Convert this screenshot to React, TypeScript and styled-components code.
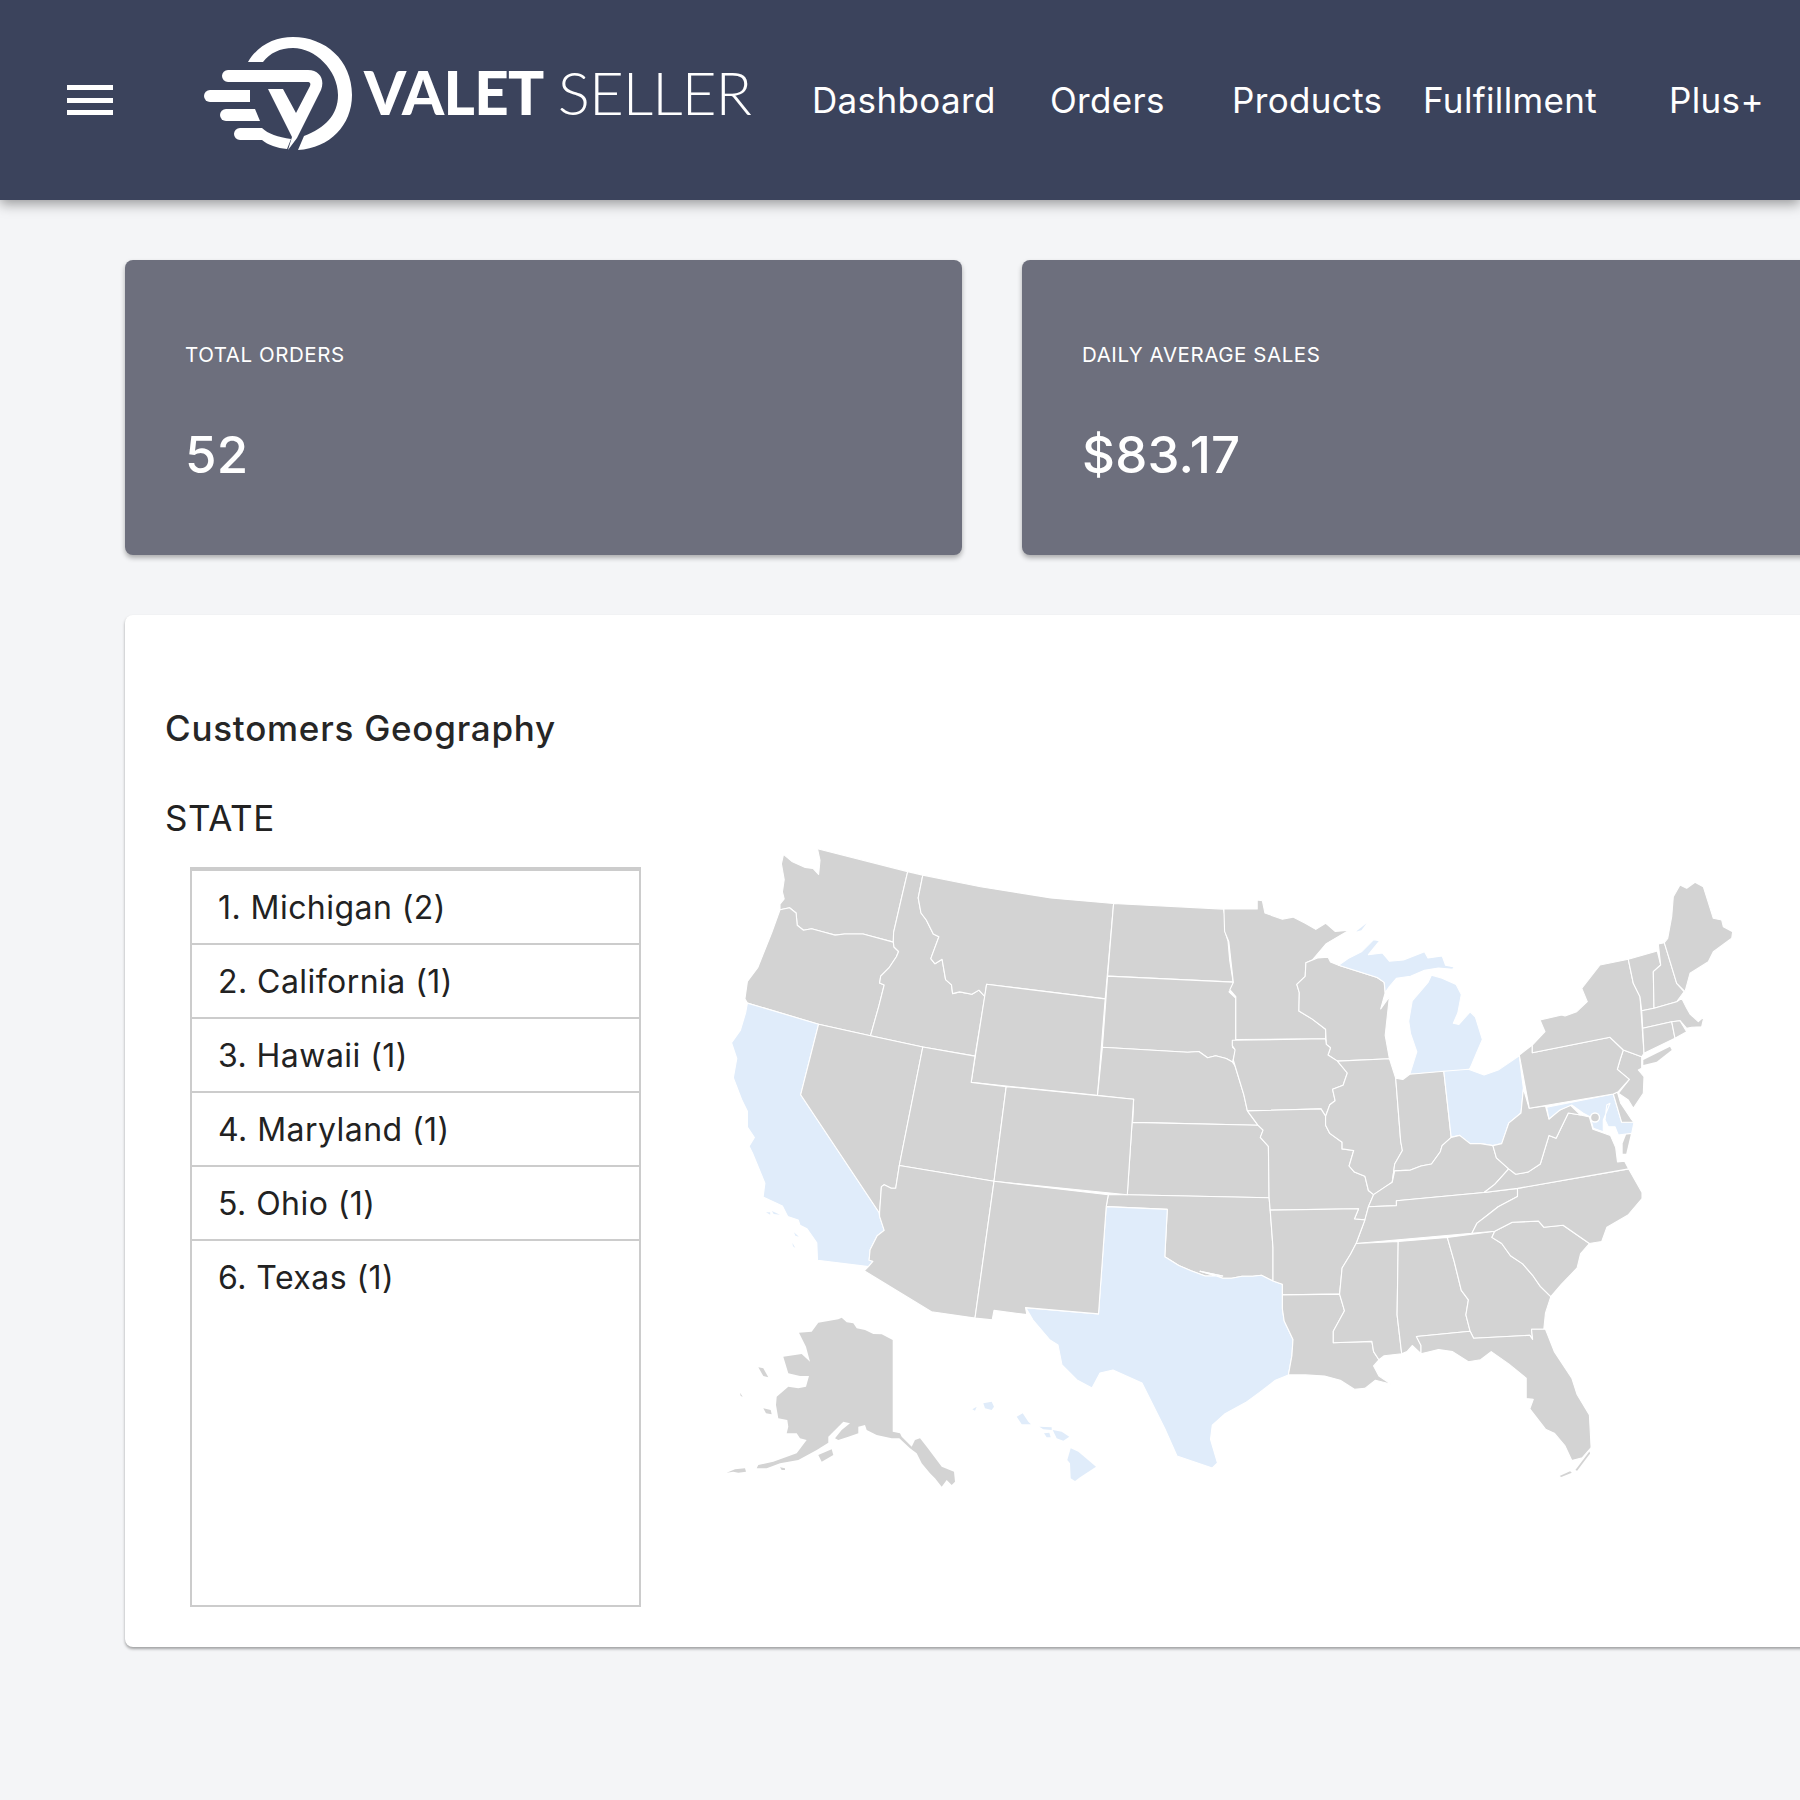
import React from 'react';
import styled, { createGlobalStyle } from 'styled-components';

const Global = createGlobalStyle`
  html, body { margin: 0; padding: 0; background: #f4f5f7; }
  body { font-family: Inter, Lato, "Noto Sans", sans-serif; color: #222; overflow: hidden; height: 1800px; }
`;

const conv = (s: string, ox: number, oy: number, sx: number, sy: number) =>
  s.trim().split(/\s+/).map((p) => {
    const [x, y] = p.split(',').map(Number);
    return `${(ox + x * sx).toFixed(1)},${(oy + y * sy).toFixed(1)}`;
  }).join(' ');
const W = (s: string) => conv(s, 700, 820, 0.3508, 0.3508);
const E = (s: string) => conv(s, 1200, 860, 0.3508, 0.408);
const N = (s: string) => conv(s, 1500, 870, 1 / 3, 1 / 3);
const A = (s: string) => conv(s, 700, 1290, 1 / 3, 1 / 3);

const STATES: { on?: boolean; bare?: boolean; pts: string }[] = [
  { pts: W('335,82 592,147 575,220 552,320 551,348 465,325 412,325 385,328 355,320 318,310 295,314 277,300 274,265 255,250 228,256 228,240 240,225 235,205 240,170 232,125 238,98 262,118 300,135 322,138 338,155 342,115') },
  { pts: W('228,256 255,250 274,265 277,300 295,314 318,310 355,320 385,328 412,325 465,325 551,348 553,362 566,375 560,390 540,420 515,445 512,465 525,470 510,530 486,615 338,582 135,522 128,510 135,460 165,420 205,320') },
  { pts: W('592,147 635,157 622,222 630,265 645,285 665,325 681,333 658,395 670,410 690,397 700,455 717,470 720,495 740,490 775,497 795,485 812,503 784,673 635,647 486,615 510,530 525,470 512,465 515,445 540,420 560,390 566,375 553,362 551,348 552,320 575,220') },
  { pts: W('635,157 800,190 1000,222 1179,238 1155,510 817,468 812,503 795,485 775,497 740,490 720,495 717,470 700,455 690,397 670,410 658,395 681,333 665,325 645,285 630,265 622,222') },
  { pts: W('817,468 1155,510 1133,785 773,748') },
  { pts: W('1179,238 1492,254 1497,275 1497,318 1505,345 1510,400 1520,462 1162,445') },
  { pts: W('1162,445 1520,462 1520,475 1508,490 1527,508 1527,627 1518,632 1518,648 1527,655 1518,690 1500,680 1470,672 1447,678 1422,660 1390,662 1147,648') },
  { pts: W('1147,648 1390,662 1422,660 1447,678 1470,672 1500,680 1518,690') + ' ' + E('100,505 125,575 135,615 165,650') + ' ' + W('1233,862 1236,796 1133,785') },
  { pts: W('1233,862') + ' ' + E('165,650 180,662 172,680 195,702 197,828') + ' ' + W('1218,1068 1236,796') },
  { pts: W('1164,1068 1218,1068') + ' ' + E('197,828 200,858 208,950 208,1032 175,1018 150,1020 120,1020 90,1025 65,1025 40,1018 0,1008') + ' ' + W('1490,1300 1440,1300 1400,1285 1365,1270 1325,1245 1332,1110 1158,1102') },
  { on: true, pts: W('1158,1102 1332,1110 1325,1245 1365,1270 1400,1285 1440,1300 1490,1300') + ' ' + E('0,1008 40,1018 65,1025 90,1025 120,1020 150,1020 175,1018 208,1032 235,1040 235,1100 240,1130 265,1175 262,1215 252,1262 215,1275 170,1305 130,1330 70,1358 35,1385 30,1420 50,1478 35,1490') + ' 1177,1456 1165,1429 1142,1383 1113,1370 1100,1373 1092,1388 1077,1380 1062,1365 1058,1345 1050,1340 1033,1320 1026,1308 ' + W('928,1390 1136,1408') },
  { on: true, pts: W('135,522 338,582 287,783 510,1118 512,1130 525,1170 505,1185 485,1225 482,1255 493,1258 480,1273 335,1255 333,1205 305,1165 285,1155 280,1140 250,1130 235,1100 180,1075 185,1035 150,950 140,930 155,905 135,875 135,830 120,800 95,735 105,680 90,635 115,600 130,550') },
  { on: true, bare: true, pts: W('188,1118 200,1118 200,1125') },
  { on: true, bare: true, pts: W('205,1115 228,1125 210,1123') },
  { on: true, bare: true, pts: W('268,1175 282,1188 272,1185') },
  { on: true, bare: true, pts: W('263,1205 272,1220 265,1215') },
  { pts: W('338,582 486,615 635,647 568,985 558,1050 545,1050 525,1040 517,1045 512,1118 510,1118 287,783') },
  { pts: W('635,647 784,673 773,748 873,760 838,1030 568,985') },
  { pts: W('568,985 838,1030 784,1420 660,1402 468,1285 480,1273 493,1258 482,1255 485,1225 505,1185 525,1170 512,1130 512,1118 517,1045 525,1040 545,1050 558,1050') },
  { pts: W('873,760 1236,796 1218,1068 838,1030') },
  { pts: W('838,1030 1164,1068 1158,1102 1136,1408 928,1390 932,1410 838,1398 833,1425 784,1420') },
  { pts: E('68,120 163,120 163,98 178,100 185,130 235,145 265,140 300,155 330,170 358,155 385,175 425,172 360,205 320,245 302,252 300,285 276,305 283,325 282,370 320,390 358,415 358,438 102,440 102,335 85,318 95,300 82,200 70,175') },
  { pts: E('302,252 335,240 365,238 372,250 395,258 440,270 505,288 525,300 528,325 515,365 540,335 528,430 540,487 392,493 365,478 372,460 360,452 358,415 320,390 282,370 283,325 276,305 300,285') },
  { pts: E('92,442 358,438 360,452 372,460 365,478 392,493 420,522 408,552 378,562 385,590 370,600 358,628 345,610 135,615 125,575 100,505 95,490 100,465 92,455') },
  { pts: E('135,615 345,610 358,628 358,650 370,670 405,692 405,708 438,712 425,750 440,765 470,775 480,810 495,820 480,850 470,882 440,880 452,855 200,858 197,828 195,702 172,680 180,662 165,650') },
  { on: true, pts: E('395,258 425,240 460,225 495,195 512,198 480,232 520,228 540,248 580,245 640,225 650,240 690,235 700,258 725,262 720,268 680,265 640,270 600,285 560,290 540,310 528,325 525,300 505,288 440,270') },
  { on: true, bare: true, pts: E('445,175 475,155 460,172') },
  { on: true, pts: E('598,525 618,470 600,425 595,395 605,345 630,320 650,300 660,282 690,290 730,305 745,330 735,375 722,400 738,403 770,372 785,385 805,440 790,470 770,510 765,515') },
  { pts: E('392,493 540,487 558,535 572,690 577,712 555,745 548,790 530,800 495,820 480,810 470,775 440,765 425,750 438,712 405,708 405,692 370,670 358,650 358,628 370,600 385,590 378,562 408,552 420,522') },
  { pts: E('558,535 578,538 598,525 695,518 716,680 690,700 685,715 660,745 630,750 600,760 555,762 548,790 555,745 577,712 572,690') },
  { on: true, pts: E('695,518 765,513 810,527 850,515 910,480 922,560 915,620 880,645 860,695 835,700 800,695 770,695 740,675 716,680') },
  { pts: E('716,680 740,675 770,695 800,695 835,700 845,730 880,757 840,795 810,815 560,835 560,847 480,850 495,820 530,800 548,790 555,762 600,760 630,750 660,745 685,715 690,700') },
  { pts: E('480,850 560,847 560,835 810,815 905,805 905,825 850,850 820,870 790,890 775,915 445,940 460,905 470,882') },
  { pts: E('200,858 452,855 440,880 470,882 460,905 445,940 430,965 405,1000 398,1064 235,1066 235,1040 208,1032 208,950') },
  { pts: E('235,1066 398,1064 412,1105 380,1155 380,1183 490,1180 495,1205 510,1225 495,1240 510,1265 545,1285 500,1275 470,1295 440,1297 400,1275 355,1265 300,1262 252,1262 262,1215 265,1175 240,1130 235,1100') },
  { pts: E('445,940 565,935 562,1115 575,1210 525,1215 510,1225 495,1205 490,1180 380,1183 380,1155 412,1105 398,1064 405,1000 430,965') },
  { pts: E('565,935 705,925 725,985 745,1055 765,1078 758,1115 770,1155 617,1168 630,1190 630,1210 605,1190 590,1205 575,1210 562,1115') },
  { pts: E('705,925 840,910 832,925 860,940 885,970 920,990 950,1020 970,1045 1000,1070 985,1110 980,1150 945,1150 948,1175 940,1165 780,1172 770,1155 758,1115 765,1078 745,1055 725,985') },
  { pts: E('617,1168 770,1155 780,1172 940,1165 948,1175 945,1150 985,1150 1010,1205 1060,1270 1075,1310 1110,1360 1115,1440 1090,1465 1060,1472 1040,1435 1010,1405 985,1395 940,1345 950,1322 930,1320 930,1270 880,1235 830,1205 800,1225 765,1230 720,1205 680,1200 630,1210 630,1190') },
  { bare: true, pts: E('1025,1510 1055,1498 1060,1502 1030,1512') },
  { bare: true, pts: E('1070,1495 1110,1450 1112,1455 1075,1497') },
  { pts: E('840,910 890,888 965,885 980,900 1035,895 1110,940 1085,965 1075,1000 1030,1040 1000,1070 970,1045 950,1020 920,990 885,970 860,940 832,925') },
  { pts: E('905,805 1222,757 1260,815 1260,830 1220,870 1160,900 1145,935 1110,940 1035,895 980,900 965,885 890,888 840,910 775,915 790,890 820,870 850,850 905,825') },
  { pts: E('810,815 840,795 880,757 900,770 935,765 970,745 995,675 1015,682 1050,620 1085,625 1110,630 1120,660 1170,675 1185,705 1190,740 1210,738 1222,757 905,805') },
  { bare: true, pts: E('1215,672 1228,672 1215,720 1205,720 1205,695') },
  { pts: E('835,700 860,695 880,645 915,620 922,560 938,608 985,603 995,635 1020,615 1055,600 1085,625 1050,620 1015,682 995,675 970,745 935,765 900,770 880,757 845,730') },
  { on: true, pts: N('140,712 340,672 365,757 402,757 395,790 355,795 345,770 325,770 315,750 320,705 330,700 310,750 310,785 280,775 270,740 250,730 215,705 180,720 147,747') },
  { pts: N('340,672 352,665 362,700 392,745 402,757 365,757') },
  { pts: N('370,540 425,560 425,595 415,600 432,620 430,670 400,715 385,690 355,670 388,628 352,598 360,570') },
  { pts: N('58,555 97,525 97,548 330,502 370,540 360,570 352,598 388,628 355,665 340,672 88,715') },
  { pts: N('97,525 135,485 120,450 185,435 195,438 230,425 262,395 245,355 300,285 385,268 400,340 420,380 432,550 425,560 370,540 330,502 97,548') },
  { bare: true, pts: N('430,570 510,530 515,540 470,575 430,585') },
  { pts: N('385,268 472,243 482,285 460,305 462,415 425,422 420,380 400,340') },
  { pts: N('475,222 493,218 530,340 552,365 530,395 462,415 460,305 482,285') },
  { pts: N('493,218 503,205 515,140 520,80 540,45 560,55 585,37 610,50 640,145 665,150 670,170 698,185 695,205 640,245 625,275 570,310 555,365 530,340') },
  { pts: N('425,422 462,415 530,395 545,385 560,415 570,432 595,455 612,440 605,470 575,472 560,475 540,452 515,455 428,475') },
  { pts: N('428,475 515,455 525,505 432,550') },
  { pts: N('515,455 540,452 560,485 525,505') },
  { bare: true, pts: A('297,128 335,125 355,98 415,88 425,83 440,97 460,100 470,115 495,120 520,132 545,133 578,150 578,425 600,430 605,440 635,470 645,450 660,445 680,470 725,530 762,545 765,575 755,585 740,570 725,590 705,565 690,550 665,520 650,490 630,475 598,445 575,445 530,435 500,420 495,405 475,410 475,430 445,440 415,450 405,445 425,420 450,400 430,395 385,440 385,458 350,480 295,510 240,520 200,535 170,535 175,525 220,515 290,490 320,450 300,445 290,430 260,430 265,410 262,390 235,385 228,345 230,320 265,290 295,295 318,290 327,258 300,258 265,250 250,200 305,192 330,215 318,170') },
  { bare: true, pts: A('80,548 105,538 135,535 138,545 115,548 100,545') },
  { bare: true, pts: A('175,232 190,235 205,262 190,258') },
  { bare: true, pts: A('120,308 128,320 122,318') },
  { bare: true, pts: A('190,355 212,360 215,373 198,370') },
  { bare: true, pts: A('355,495 395,478 400,495 365,515') },
  { bare: true, pts: A('240,532 255,535 255,540 245,540') },
  { on: true, bare: true, pts: A('850,340 875,335 882,350 875,360 855,355') },
  { on: true, bare: true, pts: A('817,358 830,350 825,362') },
  { on: true, bare: true, pts: A('950,380 968,370 985,395 993,403 965,403') },
  { on: true, bare: true, pts: A('1018,410 1055,412 1055,420 1030,418') },
  { on: true, bare: true, pts: A('1032,430 1048,428 1052,442 1040,442') },
  { on: true, bare: true, pts: A('1058,420 1085,425 1108,440 1090,452 1070,445') },
  { on: true, bare: true, pts: A('1112,475 1135,485 1188,530 1140,562 1125,573 1112,565 1110,520 1102,510') },
];

const NAV = [
  { label: 'Dashboard', w: 238 },
  { label: 'Orders', w: 182 },
  { label: 'Products', w: 191 },
  { label: 'Fulfillment', w: 246 },
  { label: 'Plus+', w: 100 },
];

const RANK = ['1. Michigan (2)', '2. California (1)', '3. Hawaii (1)', '4. Maryland (1)', '5. Ohio (1)', '6. Texas (1)'];

const Header = styled.header`
  height: 200px;
  background: #3b435c;
  box-shadow: 0 4px 12px rgba(0, 0, 0, 0.38);
  display: flex;
  align-items: center;
  padding-left: 67px;
  position: relative;
`;
const Burger = styled.div`
  width: 46px;
  height: 30px;
  display: flex;
  flex-direction: column;
  justify-content: space-between;
  margin-right: 87px;
  & > span { display: block; height: 5px; background: #fff; }
`;
const LogoMark = styled.svg`
  width: 160px;
  height: 125px;
  flex: none;
  margin-top: -15px;
`;
const Brand = styled.div`
  display: flex;
  align-items: baseline;
  width: 448px;
  flex: none;
  margin-left: 4px;
  margin-top: -17px;
  color: #fff;
  font-family: Lato, sans-serif;
  font-size: 60px;
  line-height: 60px;
`;
const BrandStrong = styled.span`
  font-weight: 900;
  letter-spacing: -0.6px;
`;
const BrandThin = styled.span`
  font-weight: 300;
  margin-left: 14px;
  letter-spacing: -0.9px;
`;
const Nav = styled.nav`
  display: flex;
  align-items: center;
`;
const NavItem = styled.a<{ $w: number }>`
  width: ${(p) => p.$w}px;
  color: #fff;
  font-size: 35px;
  line-height: 44px;
  flex: none;
  letter-spacing: 0.35px;
`;
const Main = styled.main`
  padding: 60px 0 0 125px;
  width: 1800px;
  box-sizing: border-box;
`;
const Stats = styled.section`
  display: grid;
  grid-template-columns: 837px 837px;
  gap: 60px;
`;
const StatCard = styled.div`
  height: 295px;
  background: #6d6f7d;
  border-radius: 8px;
  box-shadow: 0 3px 5px rgba(0, 0, 0, 0.3);
  padding: 82px 0 0 60px;
  box-sizing: border-box;
  color: #fff;
`;
const StatLabel = styled.div`
  font-size: 20.5px;
  line-height: 26px;
  letter-spacing: 0.55px;
`;
const StatValue = styled.div`
  font-size: 51px;
  line-height: 62px;
  margin-top: 56px;
  font-weight: 500;
  letter-spacing: 0.2px;
`;
const Panel = styled.section`
  margin-top: 60px;
  width: 1734px;
  height: 1032px;
  background: #fff;
  border-radius: 8px;
  box-shadow: 0 2px 3px rgba(0, 0, 0, 0.35);
  padding: 92px 0 0 40px;
  box-sizing: border-box;
`;
const PanelTitle = styled.h2`
  margin: 0;
  font-size: 35px;
  line-height: 42px;
  font-weight: 500;
  color: #262626;
  letter-spacing: 0.75px;
`;
const GeoRow = styled.div`
  display: flex;
`;
const StateCol = styled.div`
  width: 476px;
  flex: none;
`;
const StateHead = styled.div`
  margin-top: 48px;
  font-size: 35px;
  line-height: 42px;
  letter-spacing: 0.6px;
`;
const RankList = styled.ol`
  list-style: none;
  margin: 28px 0 0 25px;
  padding: 0;
  width: 451px;
  height: 740px;
  border: 2px solid #ccc;
  border-top-width: 4px;
  box-sizing: border-box;
`;
const RankRow = styled.li`
  height: 74px;
  box-sizing: border-box;
  padding-left: 26px;
  line-height: 74px;
  font-size: 32px;
  letter-spacing: 0.45px;
  color: #222;
  &:not(:last-child) { border-bottom: 2px solid #ccc; }
`;
const MapFigure = styled.svg`
  width: 1060px;
  height: 700px;
  flex: none;
  margin: 71px 0 0 59px;
`;
const StatePoly = styled.polygon<{ $on?: boolean; $bare?: boolean }>`
  fill: ${(p) => (p.$on ? '#e0ecfa' : '#d3d3d3')};
  stroke: ${(p) => (p.$bare ? 'none' : '#fff')};
  stroke-width: 1.1;
  stroke-linejoin: round;
`;
const DcDot = styled.circle`
  fill: #d3d3d3;
  stroke: #fff;
  stroke-width: 1.4;
`;

export default function App() {
  return (
    <>
      <Global />
      <Header>
        <Burger><span /><span /><span /></Burger>
        <LogoMark viewBox="200 30 160 125" aria-label="Valet Seller logo">
          <g fill="#fff">
            <path d="M248,62 C258,45 275,37 293,37 C325,37 352,60 352,95 C352,125 330,148 298,150 L304,136 C325,128 338,115 338,95 C338,70 315,48 293,48 C280,48 270,53 263,62 Z" />
            <path d="M228,70 H308 C320,70 325,80 321,90 L297,138 L288,150 L292,137 L268,89 H283 L296,113 L310,86 C311,83 310,82 307,82 H228 A6,6 0 0 1 228,70 Z" />
            <path d="M210,90 H250 V102 H210 A6,6 0 0 1 210,90 Z" />
            <path d="M226,109 H255 L260,121 H226 A6,6 0 0 1 226,109 Z" />
            <path d="M240,128 H262 C268,134 278,137 291,139 L287,149 C277,148 268,145 262,140 H240 A6,6 0 0 1 240,128 Z" />
          </g>
        </LogoMark>
        <Brand>
          <BrandStrong>VALET</BrandStrong>
          <BrandThin>SELLER</BrandThin>
        </Brand>
        <Nav>
          {NAV.map((n) => <NavItem key={n.label} $w={n.w}>{n.label}</NavItem>)}
        </Nav>
      </Header>
      <Main>
        <Stats>
          <StatCard><StatLabel>TOTAL ORDERS</StatLabel><StatValue>52</StatValue></StatCard>
          <StatCard><StatLabel>DAILY AVERAGE SALES</StatLabel><StatValue>$83.17</StatValue></StatCard>
        </Stats>
        <Panel>
          <PanelTitle>Customers Geography</PanelTitle>
          <GeoRow>
            <StateCol>
              <StateHead>STATE</StateHead>
              <RankList>
                {RANK.map((r) => <RankRow key={r}>{r}</RankRow>)}
              </RankList>
            </StateCol>
            <MapFigure viewBox="700 820 1060 700" aria-label="United States map">
              {STATES.map((s, i) => <StatePoly key={i} $on={s.on} $bare={s.bare} points={s.pts} />)}
              <DcDot cx={1595} cy={1117.5} r={4.5} />
            </MapFigure>
          </GeoRow>
        </Panel>
      </Main>
    </>
  );
}
